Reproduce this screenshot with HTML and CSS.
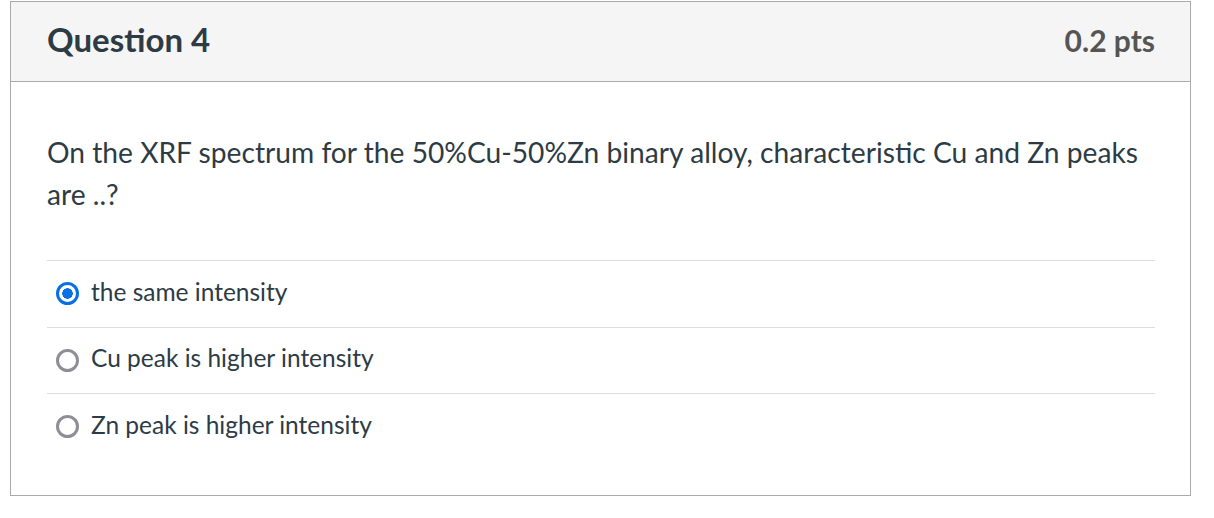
FILE: index.html
```html
<!DOCTYPE html>
<html>
<head>
<meta charset="utf-8">
<link rel="stylesheet" href="styles.css">
</head>
<body>
<div class="card">
  <div class="card-header">
    <h2 class="q-title">Question 4</h2>
    <div class="q-points">0.2 pts</div>
  </div>
  <div class="card-body">
    <p class="q-text">On the XRF spectrum for the 50%Cu-50%Zn binary alloy, characteristic Cu and Zn peaks are ..?</p>
    <div class="answers">
      <label class="answer">
        <span class="radio checked"></span>
        <span class="answer-text">the same intensity</span>
      </label>
      <label class="answer">
        <span class="radio"></span>
        <span class="answer-text">Cu peak is higher intensity</span>
      </label>
      <label class="answer">
        <span class="radio"></span>
        <span class="answer-text">Zn peak is higher intensity</span>
      </label>
    </div>
  </div>
</div>
</body>
</html>
```

FILE: styles.css
```css
body {
  margin: 0;
  padding: 1px 0 0 10px;
  font-family: Lato, "Liberation Sans", sans-serif;
  background: #fff;
  color: #2d3b45;
}
.card {
  width: 1179px;
  height: 493px;
  border: 1px solid #aaaaaa;
  box-sizing: content-box;
}
.card-header {
  background: #f5f5f5;
  border-bottom: 1px solid #aaaaaa;
  display: flex;
  align-items: center;
  justify-content: space-between;
  padding: 0 35px 0 36px;
  box-sizing: border-box;
  height: 80px;
}
.q-title {
  margin: 0 0 5px 0;
  font-size: 33px;
  line-height: 40px;
  font-weight: 700;
  color: #2d3b45;
}
.q-points {
  margin-bottom: 3px;
  font-size: 30px;
  line-height: 40px;
  font-weight: 700;
  color: #555555;
}
.card-body {
  padding: 49px 35px 0 36px;
}
.q-text {
  margin: 0;
  font-size: 28.2px;
  line-height: 42px;
  color: #2d3b45;
}
.answers {
  margin-top: 45px;
}
.answer {
  display: flex;
  align-items: center;
  height: 66.5px;
  border-top: 1px solid #dddddd;
  padding-left: 9px;
  box-sizing: border-box;
}
.radio {
  width: 23px;
  height: 23px;
  border-radius: 50%;
  border: 3px solid #8e8e96;
  box-sizing: border-box;
  margin-right: 12px;
  flex: none;
}
.radio.checked {
  border-color: #0a6ee4;
  background: radial-gradient(circle, #0a6ee4 0 5px, #fff 5.5px);
}
.answer-text {
  font-size: 24.5px;
  padding-bottom: 5px;
  color: #2d3b45;
}
```
